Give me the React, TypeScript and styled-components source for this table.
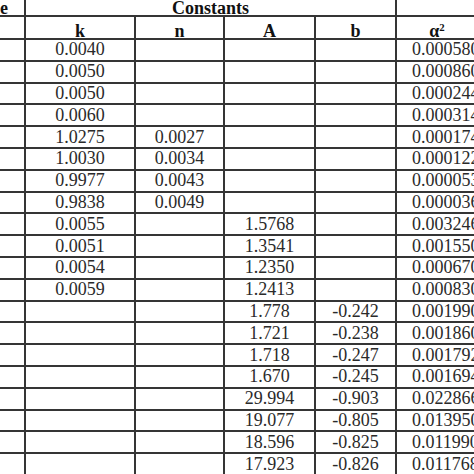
import React from "react";
import styled, { createGlobalStyle } from "styled-components";

const GlobalStyle = createGlobalStyle`
  html, body {
    margin: 0;
    padding: 0;
    background: #ffffff;
    overflow: hidden;
  }
`;

const Frame = styled.div`
  width: 474px;
  height: 474px;
  overflow: hidden;
  background: #ffffff;
`;

const Grid = styled.div`
  display: grid;
  grid-template-columns: 89px 108px 87px 89px 79px 88px;
  grid-template-rows: 21px 21px repeat(20, 19.8px);
  gap: 2px;
  width: max-content;
  margin: -6px 0 0 -65px;
  background: #353535;
  font-family: "Liberation Serif", "Times New Roman", serif;
  font-size: 18px;
`;

const Cell = styled.div<{ $head?: boolean; $span?: number; $left?: boolean }>`
  background: #ffffff;
  display: flex;
  align-items: ${(p) => (p.$head ? "flex-end" : "center")};
  justify-content: ${(p) => (p.$left ? "flex-start" : "center")};
  padding-left: ${(p) => (p.$left ? "15px" : "0")};
  grid-column: ${(p) => (p.$span ? `span ${p.$span}` : "auto")};
  font-weight: ${(p) => (p.$head ? 700 : 400)};
  color: ${(p) => (p.$head ? "#111" : "#2a2a2a")};
  line-height: ${(p) => (p.$head ? "0.8" : "normal")};
  white-space: nowrap;
`;

const Sup = styled.sup`
  font-size: 0.6em;
  line-height: 0;
  vertical-align: 0.6em;
`;

const Alpha = styled.span`
  margin-right: 8px;
`;

type Row = [string, string, string, string, string];

const rows: Row[] = [
  ["0.0040", "", "", "", "0.000580"],
  ["0.0050", "", "", "", "0.000860"],
  ["0.0050", "", "", "", "0.000244"],
  ["0.0060", "", "", "", "0.000314"],
  ["1.0275", "0.0027", "", "", "0.000174"],
  ["1.0030", "0.0034", "", "", "0.000122"],
  ["0.9977", "0.0043", "", "", "0.000053"],
  ["0.9838", "0.0049", "", "", "0.000036"],
  ["0.0055", "", "1.5768", "", "0.003246"],
  ["0.0051", "", "1.3541", "", "0.001550"],
  ["0.0054", "", "1.2350", "", "0.000670"],
  ["0.0059", "", "1.2413", "", "0.000830"],
  ["", "", "1.778", "-0.242", "0.001990"],
  ["", "", "1.721", "-0.238", "0.001860"],
  ["", "", "1.718", "-0.247", "0.001792"],
  ["", "", "1.670", "-0.245", "0.001694"],
  ["", "", "29.994", "-0.903", "0.022866"],
  ["", "", "19.077", "-0.805", "0.013950"],
  ["", "", "18.596", "-0.825", "0.011990"],
  ["", "", "17.923", "-0.826", "0.011768"],
];

export default function App() {
  return (
    <Frame>
      <GlobalStyle />
      <Grid>
        <Cell $head>Sample</Cell>
        <Cell $head $span={4}>
          Constants
        </Cell>
        <Cell $head />

        <Cell $head />
        <Cell $head>k</Cell>
        <Cell $head>n</Cell>
        <Cell $head>A</Cell>
        <Cell $head>b</Cell>
        <Cell $head>
          <Alpha>
            α<Sup>2</Sup>
          </Alpha>
        </Cell>

        {rows.map((r, i) => (
          <React.Fragment key={i}>
            <Cell />
            <Cell>{r[0]}</Cell>
            <Cell>{r[1]}</Cell>
            <Cell>{r[2]}</Cell>
            <Cell>{r[3]}</Cell>
            <Cell $left>{r[4]}</Cell>
          </React.Fragment>
        ))}
      </Grid>
    </Frame>
  );
}
